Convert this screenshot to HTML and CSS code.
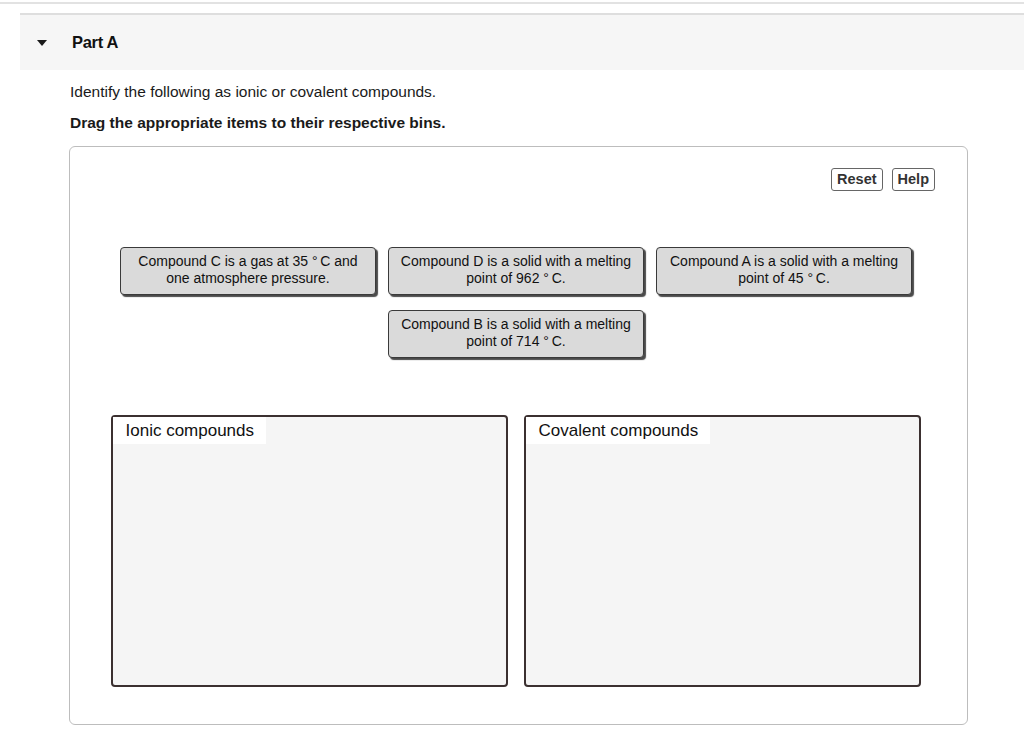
FILE: index.html
```html
<!DOCTYPE html>
<html>
<head>
<meta charset="utf-8">
<link rel="stylesheet" href="styles.css">
</head>
<body>
<div class="topline"></div>
<div class="part-header">
  <span class="caret"></span>
  <span class="part-title">Part A</span>
</div>
<div class="content">
  <p class="prompt">Identify the following as ionic or covalent compounds.</p>
  <p class="instr">Drag the appropriate items to their respective bins.</p>
  <div class="dnd">
    <div class="tools">
      <button class="btn">Reset</button>
      <button class="btn">Help</button>
    </div>
    <div class="cards">
      <div class="card">Compound C is a gas at 35 &#176;&#8201;C and<br>one atmosphere pressure.</div>
      <div class="card">Compound D is a solid with a melting<br>point of 962 &#176;&#8201;C.</div>
      <div class="card">Compound A is a solid with a melting<br>point of 45 &#176;&#8201;C.</div>
      <div class="card">Compound B is a solid with a melting<br>point of 714 &#176;&#8201;C.</div>
    </div>
    <div class="bins">
      <div class="bin"><div class="bin-label">Ionic compounds</div></div>
      <div class="bin"><div class="bin-label">Covalent compounds</div></div>
    </div>
  </div>
</div>
</body>
</html>
```

FILE: styles.css
```css
html, body {
  margin: 0;
  padding: 0;
  background: #ffffff;
  font-family: "Liberation Sans", Arial, sans-serif;
  color: #1a1a1a;
}

.topline {
  margin-top: 2px;
  height: 2px;
  background: #e2e2e2;
}

.part-header {
  margin: 9px 0 0 20px;
  border-top: 2px solid #dedede;
  background: #f6f6f6;
  height: 55px;
  display: flex;
  align-items: center;
}

.caret {
  width: 0;
  height: 0;
  margin-left: 17px;
  border-left: 5px solid transparent;
  border-right: 5px solid transparent;
  border-top: 6px solid #1a1a1a;
}

.part-title {
  margin-left: 25px;
  font-size: 16.5px;
  font-weight: bold;
  color: #111;
  letter-spacing: -0.3px;
}

.content {
  padding-left: 69px;
}

.prompt {
  margin: 12px 0 0 1px;
  font-size: 15.5px;
  line-height: 20px;
}

.instr {
  margin: 11px 0 0 1px;
  font-size: 15.5px;
  line-height: 20px;
  font-weight: bold;
}

.dnd {
  margin-top: 13px;
  width: 897px;
  height: 577px;
  border: 1px solid #bdbdbd;
  border-radius: 6px;
  display: flex;
  flex-direction: column;
}

.tools {
  display: flex;
  justify-content: flex-end;
  gap: 9px;
  padding: 21px 32px 0 0;
}

.btn {
  font-family: "Liberation Sans", Arial, sans-serif;
  font-size: 14.5px;
  font-weight: bold;
  color: #333;
  background: #fff;
  border: 1px solid #666;
  border-radius: 3px;
  height: 23px;
  padding: 0 5px;
  margin: 0;
  line-height: 21px;
}

.cards {
  margin-top: 56px;
  display: flex;
  flex-wrap: wrap;
  justify-content: center;
  column-gap: 12px;
  row-gap: 15px;
  padding-right: 5px;
}

.card {
  box-sizing: border-box;
  width: 256px;
  height: 48px;
  background: #dadada;
  border: 1px solid #3a3a3a;
  border-radius: 4px;
  box-shadow: 2px 2px 1px #4a4a4a;
  font-size: 14px;
  line-height: 17px;
  text-align: center;
  padding-top: 5px;
  color: #111;
}

.bins {
  margin-top: 57px;
  display: flex;
  justify-content: center;
  gap: 16px;
  padding-right: 6px;
}

.bin {
  box-sizing: border-box;
  width: 397px;
  height: 272px;
  background: #f5f5f5;
  border: 2px solid #3b3030;
  border-radius: 4px;
}

.bin-label {
  display: inline-block;
  background: #ffffff;
  font-size: 17px;
  line-height: 27px;
  padding: 0 12px 0 13px;
  color: #111;
}
```
